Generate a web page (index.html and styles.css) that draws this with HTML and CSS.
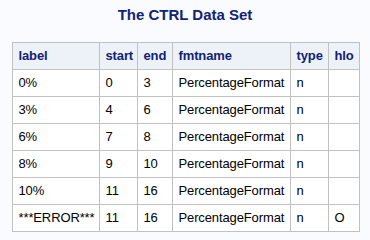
FILE: index.html
```html
<!DOCTYPE html>
<html>
<head>
<meta charset="utf-8">
<link rel="stylesheet" href="styles.css">
</head>
<body>
<div class="page">
  <h1 class="title">The CTRL Data Set</h1>
  <table class="data">
    <colgroup>
      <col class="c-label"><col class="c-start"><col class="c-end"><col class="c-fmt"><col class="c-type"><col class="c-hlo">
    </colgroup>
    <thead>
      <tr><th>label</th><th>start</th><th>end</th><th>fmtname</th><th>type</th><th>hlo</th></tr>
    </thead>
    <tbody>
      <tr><td>0%</td><td>0</td><td>3</td><td>PercentageFormat</td><td>n</td><td></td></tr>
      <tr><td>3%</td><td>4</td><td>6</td><td>PercentageFormat</td><td>n</td><td></td></tr>
      <tr><td>6%</td><td>7</td><td>8</td><td>PercentageFormat</td><td>n</td><td></td></tr>
      <tr><td>8%</td><td>9</td><td>10</td><td>PercentageFormat</td><td>n</td><td></td></tr>
      <tr><td>10%</td><td>11</td><td>16</td><td>PercentageFormat</td><td>n</td><td></td></tr>
      <tr><td>***ERROR***</td><td>11</td><td>16</td><td>PercentageFormat</td><td>n</td><td>O</td></tr>
    </tbody>
  </table>
</div>
</body>
</html>
```
FILE: styles.css
```css
html, body {
  margin: 0;
  padding: 0;
  background: #fafbfe;
}
.page {
  width: 370px;
  height: 240px;
  font-family: "Liberation Sans", Arial, sans-serif;
  display: flex;
  flex-direction: column;
  align-items: center;
}
.title {
  margin: 6px 0 0 0;
  font-size: 15px;
  line-height: 17px;
  font-weight: bold;
  color: #112277;
  text-align: center;
}
.data {
  margin-top: 19px;
  margin-left: 1px;
  border-collapse: collapse;
  border: 1px solid #c1c1c1;
  font-size: 13px;
  letter-spacing: -0.12px;
  table-layout: fixed;
  width: 348px;
}
.c-label { width: 87px; }
.c-start { width: 38px; }
.c-end { width: 35px; }
.c-fmt { width: 118px; }
.c-type { width: 38px; }
.c-hlo { width: 31px; }
.data th, .data td {
  border: 1px solid #c1c1c1;
  padding: 5px 0 5px 6px;
  line-height: 16px;
  text-align: left;
  white-space: nowrap;
  overflow: visible;
}
.data th {
  background: #edf2f9;
  color: #112277;
  font-weight: bold;
}
.data td {
  background: #ffffff;
  color: #000000;
}
```
